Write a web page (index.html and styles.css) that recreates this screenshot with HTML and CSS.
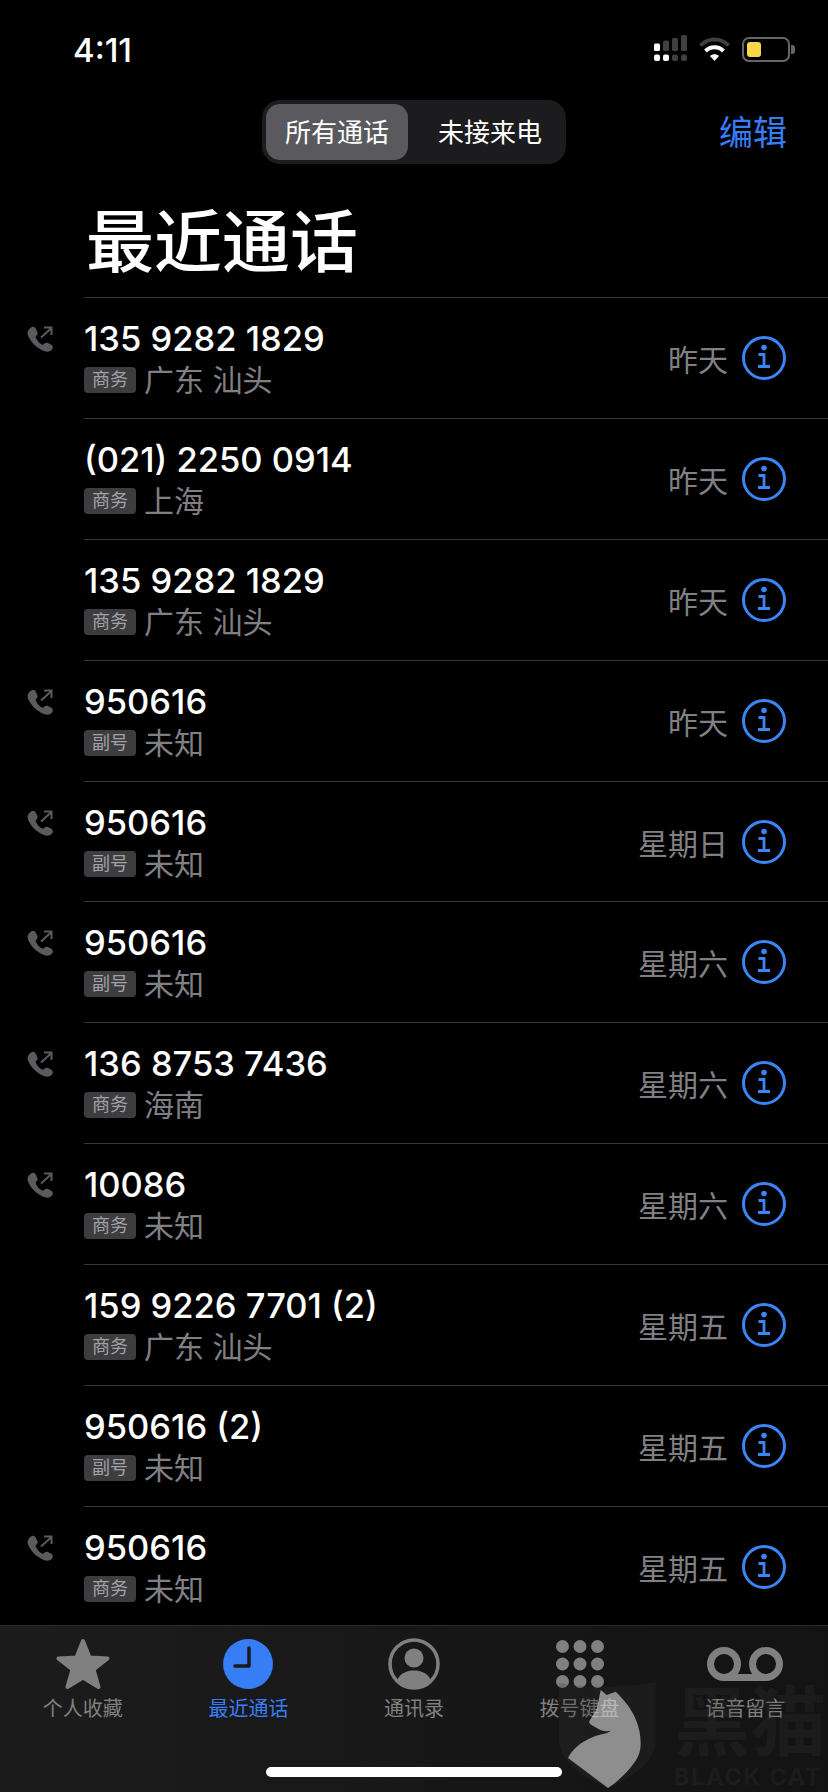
FILE: index.html
```html
<!DOCTYPE html>
<html lang="zh-CN">
<head>
  <meta charset="UTF-8" />
  <title>最近通话</title>
  <link rel="stylesheet" href="styles.css">
</head>
<body>
  <svg class="defs" width="0" height="0">
    <symbol id="out" viewBox="0 0 27 27">
      <path d="M4 1.500C6 0 8 1 9 3l1.500 3.500C11 8 10 9 9 10c-.5.5-.5 1 0 2 1.500 3 3 5 6 6.500 1 .5 1.500 0 2-.5 1-1 2.500-1.500 4-1l3 1.500c2 1 2.500 3.500 1 5-1.500 2-4.500 3-8 1.500C9 22 3 15 .8 9 0 6 1.500 3 4 1.500Z" fill="currentColor"/>
      <path d="M14 11.500 24.500 2M17 1.500h7.500V9" fill="none" stroke="currentColor" stroke-width="2"/>
    </symbol>
    <symbol id="info" viewBox="0 0 44 44">
      <circle cx="22" cy="22" r="20.500" fill="none" stroke="currentColor" stroke-width="3"/>
      <circle cx="22" cy="11.500" r="2.800" fill="currentColor"/>
      <path d="M16.500 18.500H22V30M16 30.500h12" fill="none" stroke="currentColor" stroke-width="2.800"/>
    </symbol>
  </svg>

  <div class="phone">
    <header class="status">
      <span class="clock">4:11</span>
      <div class="status-icons">
        <svg class="signal" width="34" height="26" viewBox="0 0 34 26">
          <rect x="0" y="8.500" width="6" height="7.500" rx="1.500" fill="#fff"/>
          <rect x="9" y="5.500" width="6" height="10.500" rx="1.500" fill="#3f3f3f"/>
          <rect x="18" y="3" width="6" height="13" rx="1.500" fill="#3f3f3f"/>
          <rect x="27" y="0" width="6" height="16" rx="1.500" fill="#3f3f3f"/>
          <rect x="0" y="19.500" width="6" height="6.500" rx="2" fill="#fff"/>
          <rect x="9" y="19.500" width="6" height="6.500" rx="2" fill="#fff"/>
          <rect x="18" y="19.500" width="6" height="6.500" rx="2" fill="#3f3f3f"/>
          <rect x="27" y="19.500" width="6" height="6.500" rx="2" fill="#3f3f3f"/>
        </svg>
        <svg class="wifi" width="31" height="24" viewBox="0 0 31 24">
          <path d="M1.500 8.500C9 .5 22 .5 29.500 8.500" fill="none" stroke="#3f3f3f" stroke-width="4"/>
          <path d="M6.500 14c5-5 13-5 18 0" fill="none" stroke="#fff" stroke-width="4"/>
          <path d="M11 19c2.500-2.500 6.500-2.500 9 0l-4.500 5Z" fill="#fff"/>
        </svg>
        <div class="battery"><div class="battery-fill"></div></div>
        <div class="battery-nub"></div>
      </div>
    </header>

    <nav class="nav">
      <div class="segments">
        <span class="segment active">所有通话</span>
        <span class="segment">未接来电</span>
      </div>
      <a class="edit">编辑</a>
    </nav>

    <h1 class="title">最近通话</h1>

    <div class="list">
      <div class="row">
        <div class="gutter"><svg class="out"><use href="#out"/></svg></div>
        <div class="row-body">
          <div class="who"><div class="num">135 9282 1829</div><div class="sub"><span class="tag">商务</span>广东 汕头</div></div>
          <span class="when">昨天</span><svg class="info"><use href="#info"/></svg>
        </div>
      </div>
      <div class="row">
        <div class="gutter"></div>
        <div class="row-body">
          <div class="who"><div class="num">(021) 2250 0914</div><div class="sub"><span class="tag">商务</span>上海</div></div>
          <span class="when">昨天</span><svg class="info"><use href="#info"/></svg>
        </div>
      </div>
      <div class="row">
        <div class="gutter"></div>
        <div class="row-body">
          <div class="who"><div class="num">135 9282 1829</div><div class="sub"><span class="tag">商务</span>广东 汕头</div></div>
          <span class="when">昨天</span><svg class="info"><use href="#info"/></svg>
        </div>
      </div>
      <div class="row">
        <div class="gutter"><svg class="out"><use href="#out"/></svg></div>
        <div class="row-body">
          <div class="who"><div class="num">950616</div><div class="sub"><span class="tag">副号</span>未知</div></div>
          <span class="when">昨天</span><svg class="info"><use href="#info"/></svg>
        </div>
      </div>
      <div class="row">
        <div class="gutter"><svg class="out"><use href="#out"/></svg></div>
        <div class="row-body">
          <div class="who"><div class="num">950616</div><div class="sub"><span class="tag">副号</span>未知</div></div>
          <span class="when">星期日</span><svg class="info"><use href="#info"/></svg>
        </div>
      </div>
      <div class="row">
        <div class="gutter"><svg class="out"><use href="#out"/></svg></div>
        <div class="row-body">
          <div class="who"><div class="num">950616</div><div class="sub"><span class="tag">副号</span>未知</div></div>
          <span class="when">星期六</span><svg class="info"><use href="#info"/></svg>
        </div>
      </div>
      <div class="row">
        <div class="gutter"><svg class="out"><use href="#out"/></svg></div>
        <div class="row-body">
          <div class="who"><div class="num">136 8753 7436</div><div class="sub"><span class="tag">商务</span>海南</div></div>
          <span class="when">星期六</span><svg class="info"><use href="#info"/></svg>
        </div>
      </div>
      <div class="row">
        <div class="gutter"><svg class="out"><use href="#out"/></svg></div>
        <div class="row-body">
          <div class="who"><div class="num">10086</div><div class="sub"><span class="tag">商务</span>未知</div></div>
          <span class="when">星期六</span><svg class="info"><use href="#info"/></svg>
        </div>
      </div>
      <div class="row">
        <div class="gutter"></div>
        <div class="row-body">
          <div class="who"><div class="num">159 9226 7701 (2)</div><div class="sub"><span class="tag">商务</span>广东 汕头</div></div>
          <span class="when">星期五</span><svg class="info"><use href="#info"/></svg>
        </div>
      </div>
      <div class="row">
        <div class="gutter"></div>
        <div class="row-body">
          <div class="who"><div class="num">950616 (2)</div><div class="sub"><span class="tag">副号</span>未知</div></div>
          <span class="when">星期五</span><svg class="info"><use href="#info"/></svg>
        </div>
      </div>
      <div class="row">
        <div class="gutter"><svg class="out"><use href="#out"/></svg></div>
        <div class="row-body">
          <div class="who"><div class="num">950616</div><div class="sub"><span class="tag">商务</span>未知</div></div>
          <span class="when">星期五</span><svg class="info"><use href="#info"/></svg>
        </div>
      </div>
    </div>

    <footer class="tabbar">
      <div class="tabs">
        <div class="tab">
          <div class="tab-icon">
            <svg width="54" height="52" viewBox="0 0 54 52">
              <path d="M27 3 33.500 19.500 51.500 20.500 37.500 31.500 42.500 49 27 39.500 11.500 49 16.500 31.500 2.500 20.500 20.500 19.500Z" fill="currentColor" stroke="currentColor" stroke-width="4" stroke-linejoin="round"/>
            </svg>
          </div>
          <span>个人收藏</span>
        </div>
        <div class="tab current">
          <div class="tab-icon">
            <svg width="50" height="50" viewBox="0 0 50 50">
              <circle cx="25" cy="25" r="25" fill="currentColor"/>
              <path d="M26 9V27H12" fill="none" stroke="#1a1a1a" stroke-width="3.500" stroke-linecap="round" stroke-linejoin="round"/>
            </svg>
          </div>
          <span>最近通话</span>
        </div>
        <div class="tab">
          <div class="tab-icon">
            <svg width="52" height="52" viewBox="0 0 52 52">
              <circle cx="26" cy="26" r="24" fill="none" stroke="currentColor" stroke-width="3.500"/>
              <circle cx="26" cy="20" r="9.500" fill="currentColor"/>
              <path d="M9 42.500C12 35 19 32.500 26 32.500S40 35 43 42.500C38.500 47 32.500 49.500 26 49.500S13.500 47 9 42.500Z" fill="currentColor"/>
            </svg>
          </div>
          <span>通讯录</span>
        </div>
        <div class="tab">
          <div class="tab-icon">
            <svg width="48" height="48" viewBox="0 0 48 48">
              <g fill="currentColor">
                <circle cx="6.500" cy="6.500" r="6.500"/><circle cx="24" cy="6.500" r="6.500"/><circle cx="41.500" cy="6.500" r="6.500"/>
                <circle cx="6.500" cy="24" r="6.500"/><circle cx="24" cy="24" r="6.500"/><circle cx="41.500" cy="24" r="6.500"/>
                <circle cx="6.500" cy="41.500" r="6.500"/><circle cx="24" cy="41.500" r="6.500"/><circle cx="41.500" cy="41.500" r="6.500"/>
              </g>
            </svg>
          </div>
          <span>拨号键盘</span>
        </div>
        <div class="tab">
          <div class="tab-icon">
            <svg width="76" height="34" viewBox="0 0 76 34">
              <g fill="none" stroke="currentColor" stroke-width="7">
                <circle cx="17" cy="17" r="13.500"/><circle cx="59" cy="17" r="13.500"/>
                <path d="M17 30.500H59"/>
              </g>
            </svg>
          </div>
          <span>语音留言</span>
        </div>
      </div>
      <div class="home-bar"></div>
    </footer>

    <div class="watermark">
      <svg class="wm-logo" width="104" height="112" viewBox="0 0 104 112">
        <path d="M4 3C25 8 80 8 100.700 2V63C98 85 75 98 53 108 30 98 8 85 4 63Z" fill="rgba(50,50,50,.25)"/>
        <path d="M45.700 10 51.700 15 60.700 11.700C75 25 85.700 42 85.700 63.300 85.700 72 83 78 79 83 72 93 62 102 53 108L13 78C17 70 25.700 61.700 38 57 45 54 52 54 55.700 50.700 50 52 45.700 50.700 40 47 36 45 34 43 34 41.700 37 37 40.700 31.700 42 28 44 24 45.700 20Z" fill="rgba(255,255,255,.5)"/>
      </svg>
      <div class="wm-text">
        <div class="wm-cn">黑猫</div>
        <div class="wm-en">BLACK CAT</div>
      </div>
    </div>
  </div>
</body>
</html>
```

FILE: styles.css
```css
* {
  box-sizing: border-box;
}
body {
  margin: 0;
  background: #000;
  color: #fff;
  font-family: Inter, "Noto Sans CJK SC", sans-serif;
}
.defs {
  display: block;
  height: 0;
}
.phone {
  position: relative;
  width: 828px;
  height: 1792px;
  display: flex;
  flex-direction: column;
  overflow: hidden;
  background: #000;
}

/* status bar */
.status {
  height: 100px;
  flex: none;
  display: flex;
  justify-content: space-between;
  padding: 35px 33px 0 73px;
}
.clock {
  font-size: 33px;
  font-weight: 500;
  line-height: 30px;
}
.status-icons {
  display: flex;
  align-items: flex-start;
}
.signal {
  margin-right: 11px;
}
.wifi {
  margin: 2px 12px 0 0;
}
.battery {
  width: 48px;
  height: 25px;
  margin-top: 2px;
  padding: 3px;
  border: 2px solid #666;
  border-radius: 7px;
}
.battery-fill {
  width: 14px;
  height: 100%;
  background: #fbd84a;
  border-radius: 3px;
}
.battery-nub {
  width: 4px;
  height: 9px;
  margin: 10px 0 0 1px;
  background: #666;
  border-radius: 0 3px 3px 0;
}

/* segmented control + edit */
.nav {
  height: 64px;
  flex: none;
  display: grid;
  grid-template-columns: 1fr auto 1fr;
  align-items: center;
}
.segments {
  grid-column: 2;
  width: 304px;
  height: 64px;
  padding: 4px;
  display: flex;
  align-items: stretch;
  background: #1c1c1e;
  border-radius: 18px;
}
.segment {
  width: 142px;
  display: flex;
  align-items: center;
  justify-content: center;
  padding-bottom: 4px;
  font-size: 26px;
  border-radius: 14px;
}
.segment + .segment {
  flex: 1;
  padding-left: 10px;
}
.segment.active {
  background: #5a5a5e;
}
.edit {
  grid-column: 3;
  justify-self: end;
  padding: 0 41px 4px 0;
  font-size: 34px;
  color: #377df6;
}

.title {
  flex: none;
  margin: 38px 0 15px;
  padding-left: 86px;
  font-size: 68px;
  line-height: 80px;
  font-weight: 500;
}

/* call rows */
.list {
  flex: 1;
  min-height: 0;
  overflow: hidden;
}
.row {
  display: flex;
  height: 120.900px;
}
.gutter {
  width: 84px;
  flex: none;
  padding: 29px 0 0 27px;
}
.out {
  display: block;
  width: 27px;
  height: 27px;
  color: #5a5a5f;
}
.row-body {
  flex: 1;
  display: flex;
  align-items: center;
  border-top: 1px solid #38383a;
  padding-right: 42px;
}
.who {
  flex: 1;
  padding-top: 1px;
}
.num {
  font-size: 34.500px;
  font-weight: 500;
  line-height: 40px;
}
.sub {
  display: flex;
  align-items: center;
  height: 40px;
  margin-top: -1px;
  font-size: 30px;
  color: #808084;
}
.tag {
  width: 52px;
  height: 26px;
  margin: 4px 8px 0 0;
  background: #3d3d40;
  border-radius: 4px;
  color: #a2a2a6;
  font-size: 18px;
  line-height: 26px;
  text-align: center;
}
.when {
  font-size: 30px;
  color: #808084;
}
.info {
  width: 44px;
  height: 44px;
  margin-left: 14px;
  color: #3a85f7;
}

/* tab bar */
.tabbar {
  height: 167px;
  flex: none;
  display: flex;
  flex-direction: column;
  background: linear-gradient(to right, #1c1c1c, #131313);
  border-top: 1px solid #2c2c2c;
}
.tabs {
  display: grid;
  grid-template-columns: repeat(5, 1fr);
  padding-top: 10px;
}
.tab {
  display: flex;
  flex-direction: column;
  align-items: center;
  font-size: 20px;
  line-height: 28px;
  color: #808080;
}
.tab span {
  margin-top: 3px;
}
.tab.current {
  color: #377df6;
}
.tab-icon {
  height: 56px;
  display: flex;
  align-items: center;
  justify-content: center;
}
.tab-icon svg {
  display: block;
}
.home-bar {
  width: 296px;
  height: 10px;
  margin: 44px auto 0;
  background: #fff;
  border-radius: 5px;
}

/* site watermark stamped over the screenshot */
.watermark {
  position: absolute;
  left: 555px;
  top: 1680px;
  width: 273px;
  height: 112px;
  display: flex;
  pointer-events: none;
}
.wm-logo {
  display: block;
  flex: none;
}
.wm-text {
  margin: 4px 0 0 15px;
  color: rgba(60,60,60,.22);
  font-weight: 700;
}
.wm-cn {
  font-size: 76px;
  line-height: 76px;
  white-space: nowrap;
}
.wm-en {
  margin-top: 4px;
  font-size: 23px;
  line-height: 26px;
  letter-spacing: 2px;
  white-space: nowrap;
}
```
